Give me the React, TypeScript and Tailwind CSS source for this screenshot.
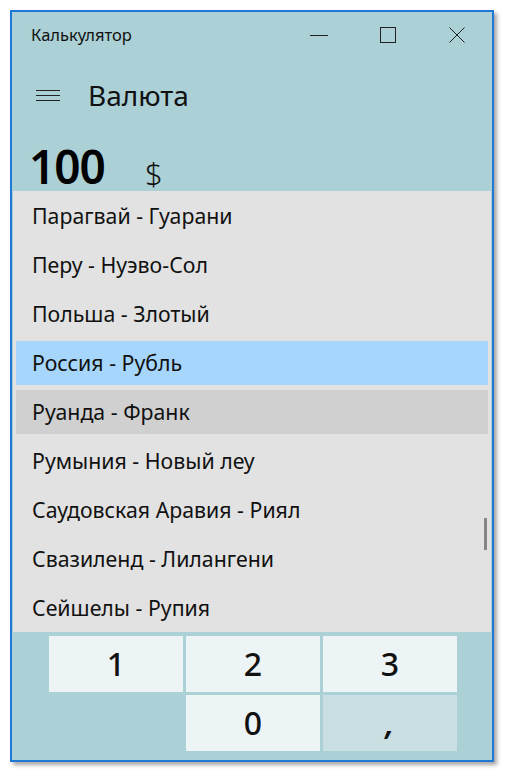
const items = [
  'Парагвай - Гуарани',
  'Перу - Нуэво-Сол',
  'Польша - Злотый',
  'Россия - Рубль',
  'Руанда - Франк',
  'Румыния - Новый леу',
  'Саудовская Аравия - Риял',
  'Свазиленд - Лилангени',
  'Сейшелы - Рупия',
];

const font = { fontFamily: '"Noto Sans", "Open Sans", sans-serif' };

export default function App() {
  return (
    <div className="h-[774px] w-[507px] bg-white pl-[10px] pt-[10px]" style={font}>
      <div className="flex h-[752px] w-[484px] flex-col border-2 border-[#1f78d6] bg-[#abd0d6] shadow-[3px_3px_4px_rgba(0,0,0,0.35)]">
        {/* title bar */}
        <div className="flex h-[46px] items-center text-[#111]">
          <span className="ml-[19px] text-[16.5px]">Калькулятор</span>
          <div className="ml-auto flex items-center">
            <svg width="18" height="18" viewBox="0 0 18 18" className="mr-[52px]">
              <line x1="0" y1="9.5" x2="18" y2="9.5" stroke="#222" strokeWidth="1" />
            </svg>
            <svg width="16" height="16" viewBox="0 0 16 16" className="mr-[53px]">
              <rect x="0.5" y="0.5" width="15" height="15" fill="none" stroke="#222" strokeWidth="1" />
            </svg>
            <svg width="16" height="16" viewBox="0 0 16 16" className="mr-[27px]">
              <path d="M0.5 0.5 L15.5 15.5 M15.5 0.5 L0.5 15.5" stroke="#222" strokeWidth="1" />
            </svg>
          </div>
        </div>

        {/* header */}
        <div className="flex h-[74px] items-center">
          <svg width="24" height="12" viewBox="0 0 24 12" className="ml-[24px]">
            <path d="M0 1.5 H24 M0 6.5 H24 M0 11.5 H24" stroke="#222" strokeWidth="1" />
          </svg>
          <span className="ml-[28px] text-[28px] text-[#111]">Валюта</span>
        </div>

        {/* value */}
        <div className="flex h-[59px] items-end pb-[2px]">
          <span className="ml-[17px] text-[46px] font-semibold leading-none tracking-[-1px] text-black">100</span>
          <span className="mb-0 ml-[40px] text-[31px] font-light leading-none text-[#111]">$</span>
        </div>

        {/* dropdown list */}
        <div className="relative mx-px flex flex-col bg-[#e2e2e2]">
          {items.map((item, i) => (
            <div key={item} className="h-[49px] px-[3px] pb-[2px] pt-[3px]">
              <div
                className={`flex h-full items-center pl-[16px] text-[21.3px] text-[#111] ${
                  i === 3 ? 'bg-[#a6d6fb]' : i === 4 ? 'bg-[#d0d0d0]' : ''
                }`}
              >
                {item}
              </div>
            </div>
          ))}
          <div className="absolute right-[4px] top-[327px] h-[32px] w-[3px] bg-[#858585]" />
        </div>

        {/* keypad */}
        <div className="ml-[37px] mt-[4px] grid w-[408px] grid-cols-3 gap-[3px] text-[32px] font-medium text-[#111]">
          <div className="flex h-[56px] items-center justify-center bg-[#ecf4f5]">1</div>
          <div className="flex h-[56px] items-center justify-center bg-[#ecf4f5]">2</div>
          <div className="flex h-[56px] items-center justify-center bg-[#ecf4f5]">3</div>
          <div className="h-[56px]" />
          <div className="flex h-[56px] items-center justify-center bg-[#ecf4f5]">0</div>
          <div className="flex h-[56px] items-center justify-center bg-[#cadfe2] font-semibold italic">,</div>
        </div>
      </div>
    </div>
  );
}
